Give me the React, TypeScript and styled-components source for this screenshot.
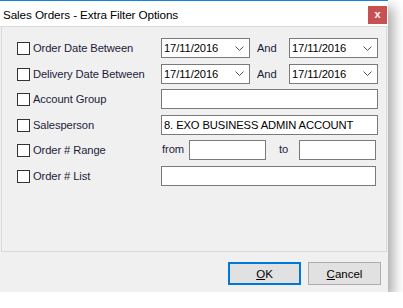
import React from 'react';
import styled, { createGlobalStyle } from 'styled-components';

const GlobalStyle = createGlobalStyle`
  html, body {
    margin: 0;
    padding: 0;
    background: #ffffff;
  }
  body {
    font-family: "Liberation Sans", Arial, sans-serif;
    font-size: 11.2px;
    letter-spacing: -0.1px;
    color: #1c1c3a;
  }
`;

const Window = styled.div`
  width: 388px;
  height: 292px;
  box-sizing: border-box;
  background: #f0f0f0;
  border-top: 1px solid #1883d7;
  box-shadow: 5px 7px 12px rgba(0, 0, 0, 0.35);
  display: flex;
  flex-direction: column;
`;

const TitleBar = styled.div`
  height: 25px;
  background: #ffffff;
  border-bottom: 1px solid #dadada;
  display: flex;
  align-items: center;
  justify-content: space-between;
  padding: 0 1px 0 3px;
`;

const Title = styled.span`
  font-size: 11.7px;
  letter-spacing: -0.1px;
  color: #000000;
  margin-top: 1px;
`;

const CloseButton = styled.button`
  width: 19px;
  height: 18px;
  margin-top: 2px;
  border: none;
  padding: 0;
  background: #c75050;
  color: #ffffff;
  font-family: "Liberation Sans", Arial, sans-serif;
  font-weight: bold;
  font-size: 11px;
  line-height: 17px;
  text-align: center;
`;

const Panel = styled.div`
  height: 225px;
  margin: 0 1px 0 1px;
  border: 1px solid #d9d9d9;
  border-top: none;
  box-sizing: border-box;
  padding: 11px 0 0 15px;
  display: grid;
  grid-template-columns: 144px 1fr;
  grid-auto-rows: 20px;
  row-gap: 5.5px;
  align-content: start;
`;

const CheckLabel = styled.label`
  display: flex;
  align-items: center;
  gap: 3px;
  white-space: nowrap;
`;

const Box = styled.span`
  width: 13px;
  height: 13px;
  box-sizing: border-box;
  border: 1px solid #333333;
  background: #ffffff;
  flex: none;
  margin-top: 1px;
`;

const Controls = styled.div`
  display: flex;
  align-items: center;
`;

const Field = styled.div<{ $w: number }>`
  width: ${(p) => p.$w}px;
  height: 20px;
  flex: none;
  box-sizing: border-box;
  border: 1px solid #7a7a7a;
  background: #ffffff;
  display: flex;
  align-items: center;
  justify-content: space-between;
  padding: 0 5px 0 2px;
  color: #000000;
  white-space: nowrap;
`;

const Word = styled.span<{ $w: number; $pad: number; $up?: boolean }>`
  width: ${(p) => p.$w}px;
  box-sizing: border-box;
  flex: none;
  padding-left: ${(p) => p.$pad}px;
  margin-top: ${(p) => (p.$up ? '-3px' : '0')};
`;

const Footer = styled.div`
  flex: 1;
  display: flex;
  justify-content: flex-end;
  align-items: flex-start;
  gap: 7px;
  padding: 10px 7px 0 0;
`;

const Button = styled.button<{ $primary?: boolean }>`
  width: 73px;
  height: 23px;
  box-sizing: border-box;
  background: #e1e1e1;
  border: ${(p) => (p.$primary ? '2px solid #0078d7' : '1px solid #adadad')};
  font-family: "Liberation Sans", Arial, sans-serif;
  font-size: 11.5px;
  color: #000000;
  padding: 0;
  u {
    text-decoration: underline;
  }
`;

const Chevron = () => (
  <svg width="9" height="5" viewBox="0 0 9 5">
    <path d="M0.5 0.5 L4.5 4.5 L8.5 0.5" fill="none" stroke="#555" strokeWidth="1" />
  </svg>
);

const DatePicker = ({ value }: { value: string }) => (
  <Field $w={89}>
    <span>{value}</span>
    <Chevron />
  </Field>
);

const Check = ({ text }: { text: string }) => (
  <CheckLabel>
    <Box />
    {text}
  </CheckLabel>
);

export default function App() {
  return (
    <>
      <GlobalStyle />
      <Window>
        <TitleBar>
          <Title>Sales Orders - Extra Filter Options</Title>
          <CloseButton>x</CloseButton>
        </TitleBar>
        <Panel>
          <Check text="Order Date Between" />
          <Controls>
            <DatePicker value="17/11/2016" />
            <Word $w={39} $pad={7}>And</Word>
            <DatePicker value="17/11/2016" />
          </Controls>

          <Check text="Delivery Date Between" />
          <Controls>
            <DatePicker value="17/11/2016" />
            <Word $w={39} $pad={7}>And</Word>
            <DatePicker value="17/11/2016" />
          </Controls>

          <Check text="Account Group" />
          <Controls>
            <Field $w={217} />
          </Controls>

          <Check text="Salesperson" />
          <Controls>
            <Field $w={217}>8. EXO BUSINESS ADMIN ACCOUNT</Field>
          </Controls>

          <Check text="Order # Range" />
          <Controls>
            <Word $w={28} $pad={1} $up>from</Word>
            <Field $w={77} />
            <Word $w={33} $pad={13} $up>to</Word>
            <Field $w={77} />
          </Controls>

          <Check text="Order # List" />
          <Controls>
            <Field $w={215} />
          </Controls>
        </Panel>
        <Footer>
          <Button $primary>
            <u>O</u>K
          </Button>
          <Button>
            <u>C</u>ancel
          </Button>
        </Footer>
      </Window>
    </>
  );
}
